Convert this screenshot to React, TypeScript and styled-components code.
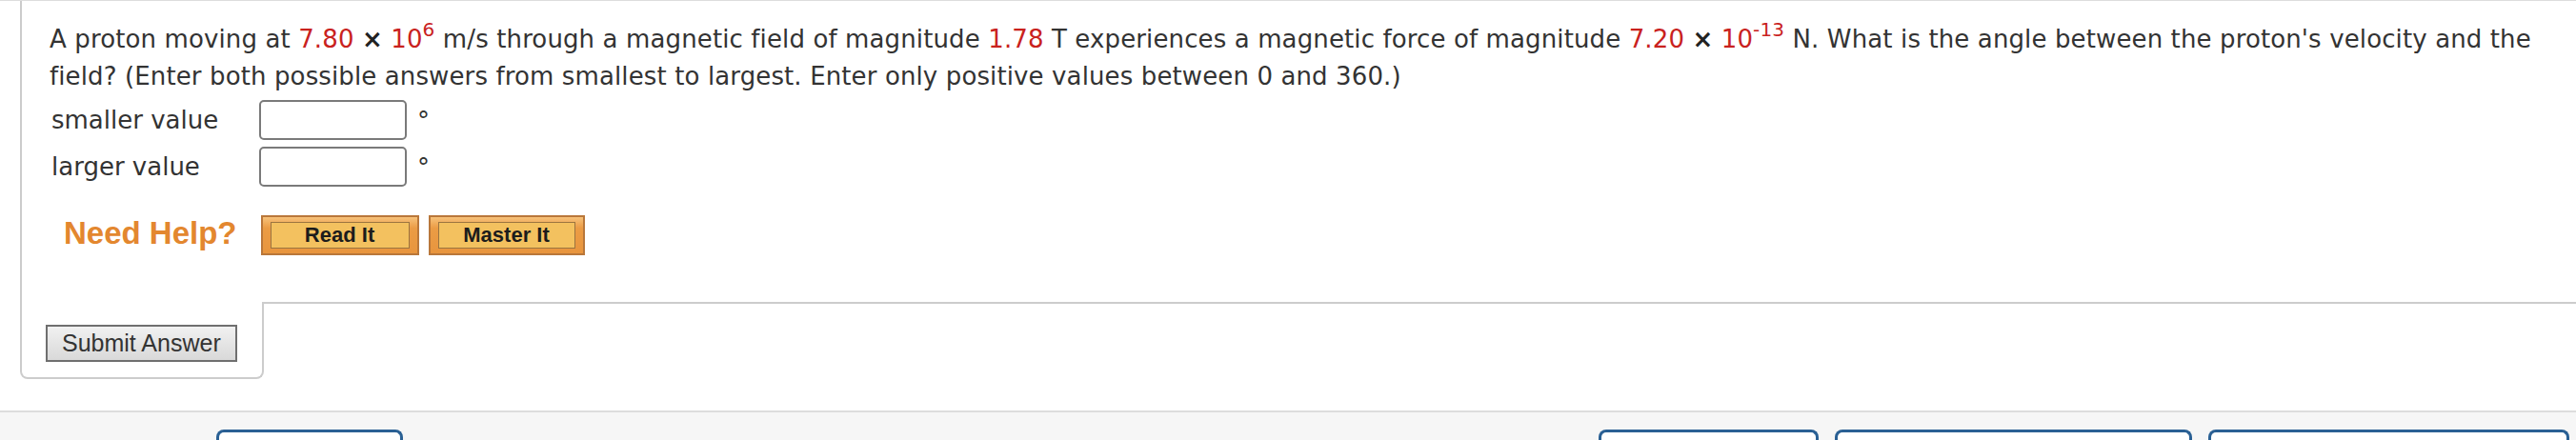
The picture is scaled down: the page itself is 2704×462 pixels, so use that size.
import React from 'react';
import styled, { createGlobalStyle } from 'styled-components';

const GlobalStyle = createGlobalStyle`
    html, body {
        margin: 0;
        padding: 0;
        background: #ffffff;
        overflow: hidden;
    }
`;

const Page = styled.div`
    width: 2704px;
    height: 462px;
    overflow: hidden;
    border-top: 1px solid #dddddd;
    box-sizing: border-box;
    font-family: 'DejaVu Sans', Verdana, sans-serif;
    color: #333333;
`;

const Question = styled.section`
    margin-left: 21px;
    border-left: 2px solid #cccccc;
    padding: 21px 20px 49px 29px;
`;

const Prompt = styled.p`
    margin: 0;
    font-size: 26px;
    line-height: 39px;
    letter-spacing: 0.12px;
`;

const Num = styled.span`
    color: #c9221e;
`;

const Sup = styled.sup`
    font-size: 20px;
    line-height: 0;
    vertical-align: 12px;
`;

const Times = styled.span`
    color: #222222;
    font-weight: 700;
`;

const Answers = styled.div`
    display: flex;
    flex-direction: column;
    gap: 7px;
    margin-top: 5px;
`;

const AnswerRow = styled.div`
    display: flex;
    align-items: center;
    height: 42px;
    font-size: 26px;
    line-height: 39px;
`;

const Label = styled.label`
    width: 220px;
    padding-left: 2px;
    box-sizing: border-box;
`;

const AnswerInput = styled.input`
    width: 155px;
    height: 42px;
    box-sizing: border-box;
    border: 2px solid #7a7a7a;
    border-radius: 5px;
    background: #ffffff;
    margin: 0;
`;

const Degree = styled.span`
    margin-left: 11px;
    margin-top: 3px;
`;

const HelpRow = styled.div`
    display: flex;
    align-items: center;
    gap: 10px;
    margin-top: 30px;
    padding-left: 15px;
`;

const HelpLabel = styled.span`
    font-family: 'Liberation Sans', Arial, sans-serif;
    font-weight: 700;
    font-size: 33px;
    color: #e3872f;
    margin-right: 15px;
    margin-top: -4px;
`;

const HelpButton = styled.button`
    width: ${(p: { $w: number }) => p.$w}px;
    height: 42px;
    box-sizing: border-box;
    padding: 5px 8px;
    border: 2px solid #b9773a;
    background: linear-gradient(#f7c27a, #eb9c45 30%, #e8953e);
    display: flex;
    cursor: pointer;
`;

const HelpButtonFace = styled.span`
    flex: 1;
    display: flex;
    align-items: center;
    justify-content: center;
    border: 1px solid #9b7440;
    background: #f3c15f;
    font-family: 'Liberation Sans', Arial, sans-serif;
    font-weight: 700;
    font-size: 22px;
    color: #1c1c1c;
`;

const SubmitRow = styled.div`
    display: flex;
    margin-left: 21px;
`;

const SubmitTab = styled.div`
    width: 256px;
    box-sizing: border-box;
    border: 2px solid #cccccc;
    border-top: none;
    border-radius: 0 0 8px 8px;
    padding: 24px 0 16px 25px;
`;

const Filler = styled.div`
    flex: 1;
    border-top: 2px solid #cccccc;
`;

const SubmitButton = styled.button`
    height: 39px;
    padding: 0 15px;
    border: 2px solid #6f6f6f;
    background: linear-gradient(#f1f1f1, #d9d9d9);
    font-family: 'Liberation Sans', Arial, sans-serif;
    font-size: 25px;
    color: #333333;
    cursor: pointer;
`;

const Footer = styled.footer`
    margin-top: 33px;
    border-top: 2px solid #dddddd;
    background: #f6f6f6;
    height: 40px;
    padding: 18px 7px 0 227px;
    display: flex;
    justify-content: space-between;
`;

const FooterGroup = styled.div`
    display: flex;
    gap: 17px;
`;

const FooterButton = styled.button`
    width: ${(p: { $w: number }) => p.$w}px;
    height: 40px;
    box-sizing: border-box;
    border: 3px solid #2a6094;
    border-bottom: none;
    border-radius: 8px 8px 0 0;
    background: #ffffff;
    padding: 0;
`;

const answers = ['smaller value', 'larger value'];

const App = () => (
    <Page>
        <GlobalStyle />
        <Question>
            <Prompt>
                A proton moving at <Num>7.80</Num> <Times>×</Times>{' '}
                <Num>
                    10<Sup>6</Sup>
                </Num>{' '}
                m/s through a magnetic field of magnitude <Num>1.78</Num> T experiences a magnetic force of
                magnitude <Num>7.20</Num> <Times>×</Times>{' '}
                <Num>
                    10<Sup>-13</Sup>
                </Num>{' '}
                N. What is the angle between the proton's velocity and the field? (Enter both possible answers
                from smallest to largest. Enter only positive values between 0 and 360.)
            </Prompt>
            <Answers>
                {answers.map((label) => (
                    <AnswerRow key={label}>
                        <Label>{label}</Label>
                        <AnswerInput type="text" />
                        <Degree>°</Degree>
                    </AnswerRow>
                ))}
            </Answers>
            <HelpRow>
                <HelpLabel>Need Help?</HelpLabel>
                <HelpButton $w={166}>
                    <HelpButtonFace>Read It</HelpButtonFace>
                </HelpButton>
                <HelpButton $w={164}>
                    <HelpButtonFace>Master It</HelpButtonFace>
                </HelpButton>
            </HelpRow>
        </Question>
        <SubmitRow>
            <SubmitTab>
                <SubmitButton>Submit Answer</SubmitButton>
            </SubmitTab>
            <Filler />
        </SubmitRow>
        <Footer>
            <FooterButton $w={196} />
            <FooterGroup>
                <FooterButton $w={231} />
                <FooterButton $w={375} />
                <FooterButton $w={379} />
            </FooterGroup>
        </Footer>
    </Page>
);

export default App;
